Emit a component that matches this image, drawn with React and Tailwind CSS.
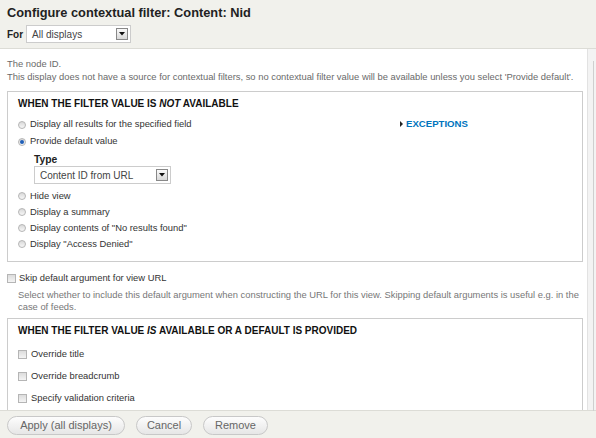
import React from "react";

const Radio = ({ checked }) => (
  <span className="relative inline-flex h-[8px] w-[8px] shrink-0 items-center justify-center rounded-full border border-[#b5b5b5] bg-gradient-to-b from-[#d9d9d9] to-[#f7f7f7]">
    {checked && <span className="h-[4px] w-[4px] rounded-full bg-[#1f5fb8]"></span>}
  </span>
);

const Checkbox = () => (
  <span className="inline-block h-[9px] w-[9px] shrink-0 border border-[#b5b5b5] bg-gradient-to-b from-[#dcdcdc] to-[#f4f4f4]"></span>
);

const Select = ({ value, width }) => (
  <div
    className={`flex h-[18px] items-center justify-between border border-[#ccc] bg-white pl-[5px] pr-[2px] ${width}`}
  >
    <span className="text-[10px] text-[#444]">{value}</span>
    <span className="flex h-[12px] w-[12px] items-center justify-center border border-[#888] bg-gradient-to-b from-[#fafafa] to-[#d8d8d8]">
      <svg width="6" height="4" viewBox="0 0 6 4">
        <path d="M0 0 L6 0 L3 3.5 Z" fill="#111" />
      </svg>
    </span>
  </div>
);

const RadioRow = ({ label, checked, h = "h-[16px]" }) => (
  <div className={`flex items-center gap-[4px] ${h}`}>
    <Radio checked={checked} />
    <span className="text-[9.4px] text-[#333]">{label}</span>
  </div>
);

const CheckRow = ({ label }) => (
  <div className="flex h-[22px] items-center gap-[4px]">
    <Checkbox />
    <span className="text-[9.4px] text-[#333]">{label}</span>
  </div>
);

const Button = ({ children, w }) => (
  <button
    className={`flex h-[19px] items-center justify-center rounded-full border border-[#c8c8c8] bg-gradient-to-b from-[#fdfdfd] to-[#e6e6e6] text-[11px] text-[#666] ${w}`}
  >
    {children}
  </button>
);

export default function App() {
  return (
    <div
      className="flex h-[438px] w-[596px] flex-col overflow-hidden bg-white"
      style={{ fontFamily: '"Liberation Sans", Arial, sans-serif' }}
    >
      {/* header */}
      <div className="h-[49px] shrink-0 border-b border-[#dcdcd6] bg-[#f1f1ec] px-[7px] pt-[5px]">
        <h1 className="h-[16px] text-[12.8px] font-bold leading-[16px] text-[#222]">
          Configure contextual filter: Content: Nid
        </h1>
        <div className="mt-[4px] flex items-center gap-[3px]">
          <span className="text-[10px] font-bold text-[#222]">For</span>
          <Select value="All displays" width="w-[105px]" />
        </div>
      </div>

      {/* body */}
      <div className="flex min-h-0 flex-1">
        <div className="flex-1 overflow-hidden pl-[7px] pr-[4px] pt-[8px]">
          <p className="text-[9.4px] leading-[13px] text-[#6a6a6a]">The node ID.</p>
          <p className="text-[9.4px] leading-[13px] text-[#6a6a6a]">
            This display does not have a source for contextual filters, so no contextual filter value will be
            available unless you select 'Provide default'.
          </p>

          <div className="mt-[8px] border border-[#ccc] pb-[9px] pl-[10px] pt-[5px]">
            <div className="h-[13px] text-[10px] font-bold leading-[13px] text-[#111]">
              WHEN THE FILTER VALUE IS <em>NOT</em> AVAILABLE
            </div>
            <div className="mt-[6px] flex">
              <div className="w-[382px]">
                <RadioRow label="Display all results for the specified field" h="h-[17px]" />
                <RadioRow label="Provide default value" checked h="h-[17px]" />
                <div className="ml-[16px] mt-[3px]">
                  <div className="h-[13px] text-[10.3px] font-bold leading-[13px] text-[#222]">Type</div>
                  <Select value="Content ID from URL" width="w-[137px]" />
                </div>
                <div className="mt-[4px]">
                  <RadioRow label="Hide view" />
                  <RadioRow label="Display a summary" />
                  <RadioRow label={'Display contents of "No results found"'} />
                  <RadioRow label={'Display "Access Denied"'} />
                </div>
              </div>
              <div className="flex h-[13px] items-center gap-[3px] pt-[3px]">
                <svg width="3" height="6" viewBox="0 0 3 6">
                  <path d="M0 0 L3 3 L0 6 Z" fill="#222" />
                </svg>
                <span className="text-[9.6px] font-bold text-[#0074bd]">EXCEPTIONS</span>
              </div>
            </div>
          </div>

          <div className="mt-[9px] flex h-[14px] items-center gap-[3px]">
            <Checkbox />
            <span className="text-[9.4px] text-[#333]">Skip default argument for view URL</span>
          </div>
          <p className="mt-[4px] pl-[11px] text-[9.4px] leading-[12px] text-[#777]">
            Select whether to include this default argument when constructing the URL for this view. Skipping
            default arguments is useful e.g. in the case of feeds.
          </p>

          {/* this fieldset runs on below the footer, so its bottom edge stays hidden */}
          <div className="mt-[5px] h-[110px] border border-[#ccc] pl-[10px] pt-[5px]">
            <div className="h-[13px] text-[10px] font-bold leading-[13px] text-[#111]">
              WHEN THE FILTER VALUE <em>IS</em> AVAILABLE OR A DEFAULT IS PROVIDED
            </div>
            <div className="mt-[6px]">
              <CheckRow label="Override title" />
              <CheckRow label="Override breadcrumb" />
              <CheckRow label="Specify validation criteria" />
            </div>
          </div>
        </div>

        {/* scrollbar */}
        <div className="relative w-[9px] shrink-0 border-l border-[#e2e2e2] bg-[#f3f3f3]">
          <div className="absolute left-[5px] top-[12px] h-[350px] border-l border-[#cfcfcf]"></div>
        </div>
      </div>

      {/* footer */}
      <div className="flex h-[28px] shrink-0 gap-[11px] border-t border-[#dcdcd6] bg-[#f1f1ec] px-[7px] pt-[5px]">
        <Button w="w-[118px]">Apply (all displays)</Button>
        <Button w="w-[56px]">Cancel</Button>
        <Button w="w-[65px]">Remove</Button>
      </div>
    </div>
  );
}
